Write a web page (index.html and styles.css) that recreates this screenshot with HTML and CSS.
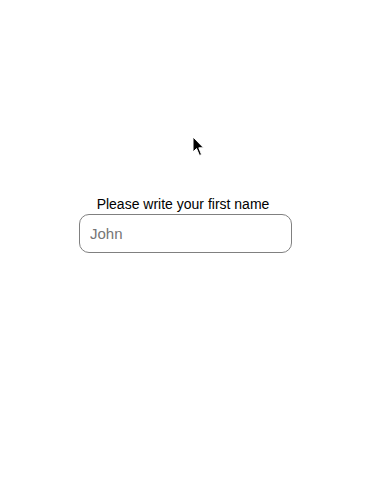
FILE: index.html
```html
<!DOCTYPE html>
<html lang="en">

<head>
    <meta charset="UTF-8">
    <meta name="viewport" content="width=device-width, initial-scale=1.0">
    <title>First name</title>
    <link rel="stylesheet" href="styles.css">
</head>

<body>
    <div class="page">
        <form class="name-form">
            <label class="name-label" for="firstName">Please write your first name</label>
            <input type="text" class="name-input" id="firstName" placeholder="John">
        </form>
    </div>

    <!-- mouse pointer from the capture -->
    <svg class="pointer" width="14" height="22" viewBox="0 0 14 22">
        <path d="M1 1 L1 16 L4.5 12.5 L7.5 19.5 L9.5 18.5 L6.8 11.8 L11.5 11.8 Z" fill="#000" stroke="#fff"
            stroke-width="1" stroke-linejoin="round" />
    </svg>
</body>

</html>
```

FILE: styles.css
```css
* {
    box-sizing: border-box;
    font-family: 'Liberation Sans', Arial, sans-serif;
}

body {
    margin: 0;
    padding: 0;
    background-color: #fff;
}

.page {
    padding-top: 195px;
    padding-left: 79px;
}

.name-form {
    width: 213px;
    display: flex;
    flex-direction: column;
}

.name-label {
    font-size: 14px;
    line-height: 18px;
    color: #000;
    text-align: center;
    padding-right: 5px;
    margin-bottom: 1px;
}

.name-input {
    width: 100%;
    height: 39px;
    border: 1px solid #808080;
    border-radius: 10px;
    padding: 0 10px;
    font-size: 15px;
    color: #000;
    outline: none;
}

.name-input::placeholder {
    color: #757575;
}

.pointer {
    position: absolute;
    top: 136px;
    left: 192px;
}
```
